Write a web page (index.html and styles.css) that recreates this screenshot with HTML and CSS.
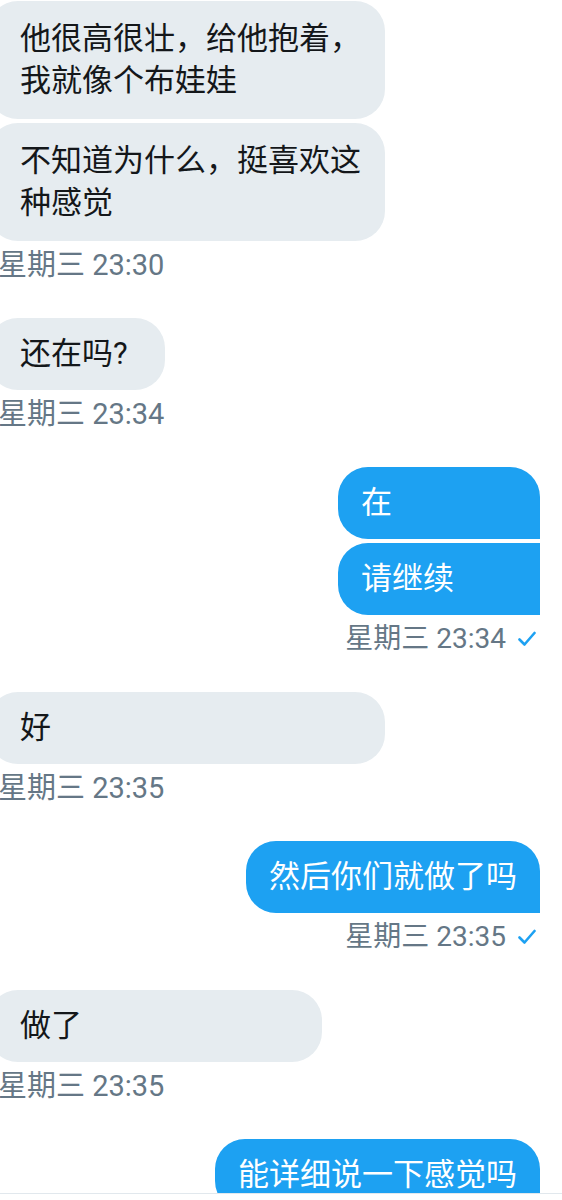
FILE: index.html
```html
<!DOCTYPE html>
<html lang="zh-CN">
<head>
    <meta charset="UTF-8">
    <meta name="viewport" content="width=device-width, initial-scale=1.0">
    <title>私信</title>
    <link rel="stylesheet" href="styles.css">
</head>
<body>
    <div class="chat">
        <div class="group in">
            <div class="bubble full tall">他很高很壮，给他抱着，我就像个布娃娃</div>
            <div class="bubble full tall">不知道为什么，挺喜欢这种感觉</div>
            <div class="time">星期三 23:30</div>
        </div>

        <div class="group in">
            <div class="bubble short">还在吗?</div>
            <div class="time">星期三 23:34</div>
        </div>

        <div class="group out">
            <div class="bubble fixed first">在</div>
            <div class="bubble fixed last">请继续</div>
            <div class="time">星期三 23:34
                <svg class="check" width="18" height="16" viewBox="0 0 18 16"><path d="M1.5 8.5 L6.5 13.5 L16.5 2" fill="none" stroke="#1da1f2" stroke-width="2.6" stroke-linecap="round" stroke-linejoin="round"/></svg>
            </div>
        </div>

        <div class="group in">
            <div class="bubble full">好</div>
            <div class="time">星期三 23:35</div>
        </div>

        <div class="group out">
            <div class="bubble">然后你们就做了吗</div>
            <div class="time">星期三 23:35
                <svg class="check" width="18" height="16" viewBox="0 0 18 16"><path d="M1.5 8.5 L6.5 13.5 L16.5 2" fill="none" stroke="#1da1f2" stroke-width="2.6" stroke-linecap="round" stroke-linejoin="round"/></svg>
            </div>
        </div>

        <div class="group in">
            <div class="bubble mid">做了</div>
            <div class="time">星期三 23:35</div>
        </div>

        <div class="group out">
            <div class="bubble">能详细说一下感觉吗</div>
        </div>
    </div>

    <div class="composer"></div>
</body>
</html>
```

FILE: styles.css
```css
* {
    box-sizing: border-box;
}
body {
    margin: 0;
    background: #ffffff;
    font-family: Roboto, "Noto Sans CJK SC", sans-serif;
    color: #14171a;
    overflow: hidden;
}
.chat {
    display: flex;
    flex-direction: column;
    padding: 1px 22px 0 0;
}
.group {
    display: flex;
    flex-direction: column;
    gap: 4px;
}
.group + .group {
    margin-top: 35px;
}
.group.in {
    align-items: flex-start;
}
.group.out {
    align-items: flex-end;
}
.bubble {
    font-size: 31px;
    line-height: 42px;
    padding: 15px 23px;
    border-radius: 30px;
}
.bubble.tall {
    padding-top: 17px;
    padding-bottom: 17px;
}
.in .bubble {
    margin-left: -12px;
    padding-left: 32px;
    padding-right: 22px;
    background: #e6ecf0;
    color: #14171a;
}
.in .bubble.full {
    width: 397px;
}
.in .bubble.mid {
    width: 334px;
}
.in .bubble.short {
    width: 177px;
}
.group.in + .group.out,
.group.out + .group.in {
    margin-top: 35px;
}
.out .bubble {
    background: #1da1f2;
    color: #ffffff;
    border-radius: 30px 30px 0 30px;
}
.out .bubble.fixed {
    width: 202px;
}
.out .bubble.last {
    border-radius: 30px 0 0 30px;
}
.time {
    font-size: 28px;
    line-height: 36px;
    margin-top: 2px;
    color: #657786;
}
.in .time {
    font-size: 29px;
    margin-left: -2px;
}
.out .time {
    display: flex;
    align-items: center;
    gap: 12px;
    padding-right: 4px;
}
.check {
    display: block;
}
.composer {
    position: fixed;
    left: 0;
    right: 0;
    bottom: 0;
    height: 7px;
    background: #ffffff;
    border-top: 1px solid #e1e8ed;
}
```
